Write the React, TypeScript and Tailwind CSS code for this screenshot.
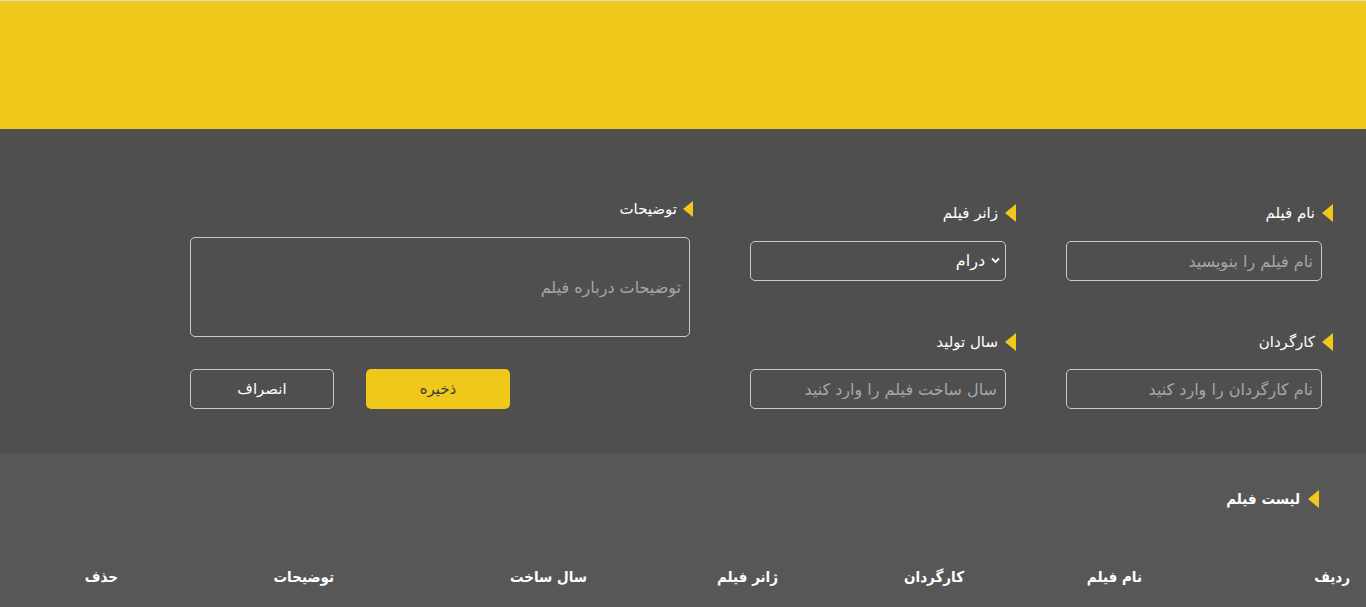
import React from 'react';

const Marker: React.FC<{ small?: boolean }> = ({ small }) => (
    <span
        className={
            small
                ? 'inline-block w-0 h-0 border-y-[8px] border-y-transparent border-r-[10px] border-r-[#f0c81a]'
                : 'inline-block w-0 h-0 border-y-[9px] border-y-transparent border-r-[11px] border-r-[#f0c81a]'
        }
    />
);

const FieldLabel: React.FC<{ text: string; className?: string }> = ({ text, className }) => (
    <div className={`flex items-center gap-[7px] h-[18px] text-[15px] text-white ${className ?? ''}`}>
        <Marker />
        <span>{text}</span>
    </div>
);

const inputCls =
    'w-full h-[40px] rounded-[5px] border border-[#c9c9c9] bg-transparent px-[8px] text-[16px] text-white placeholder:text-[#a3a7ab] outline-none';

const columns = [
    { title: 'ردیف', w: 'w-[208px]' },
    { title: 'نام فیلم', w: 'w-[178px]' },
    { title: 'کارگردان', w: 'w-[186px]' },
    { title: 'ژانر فیلم', w: 'w-[191px]' },
    { title: 'سال ساخت', w: 'w-[253px]' },
    { title: 'توضیحات', w: 'w-[216px]' },
    { title: 'حذف', w: 'w-[134px]' },
];

export default function App() {
    return (
        <div dir="rtl" className="w-[1366px] min-h-[607px] bg-[#575757] font-['DejaVu_Sans',sans-serif]">
            <header className="h-[129px] bg-[#f0c81a] border-t border-[#dcdcdc]" />

            <section className="bg-[#4f4f4f] pt-[75px] pb-[44px] pr-[44px]">
                <div className="flex gap-[60px]">
                    <div className="w-[256px] flex flex-col">
                        <div className="-mr-[11px]">
                            <FieldLabel text="نام فیلم" />
                        </div>
                        <input className={`${inputCls} mt-[19px]`} placeholder="نام فیلم را بنویسید" />
                        <div className="-mr-[11px] mt-[52px]">
                            <FieldLabel text="کارگردان" />
                        </div>
                        <input className={`${inputCls} mt-[18px]`} placeholder="نام کارگردان را وارد کنید" />
                    </div>

                    <div className="w-[256px] flex flex-col">
                        <div className="-mr-[10px]">
                            <FieldLabel text="زانر فیلم" />
                        </div>
                        <div className="relative mt-[19px]">
                            <select className={`${inputCls} appearance-none pr-[20px]`} defaultValue="drama">
                                <option value="drama" className="text-black">درام</option>
                                <option value="comedy" className="text-black">کمدی</option>
                                <option value="action" className="text-black">اکشن</option>
                            </select>
                            <svg
                                className="absolute right-[6px] top-[16px] pointer-events-none"
                                width="9"
                                height="7"
                                viewBox="0 0 9 7"
                                fill="none"
                            >
                                <path d="M1 1.5 L4.5 5 L8 1.5" stroke="white" strokeWidth="1.8" />
                            </svg>
                        </div>
                        <div className="-mr-[10px] mt-[52px]">
                            <FieldLabel text="سال تولید" />
                        </div>
                        <input className={`${inputCls} mt-[18px]`} placeholder="سال ساخت فیلم را وارد کنید" />
                    </div>

                    <div className="w-[500px] flex flex-col">
                        <div className="-mr-[3px] -mt-[4px] flex items-center gap-[6px] h-[18px] text-[15px] text-white">
                            <Marker small />
                            <span>توضیحات</span>
                        </div>
                        <textarea
                            className="mt-[19px] h-[100px] w-full resize-none rounded-[5px] border border-[#c9c9c9] bg-transparent pt-[38px] px-[8px] text-[16px] text-white placeholder:text-[#a3a7ab] outline-none"
                            placeholder="توضیحات درباره فیلم"
                        />
                        <div className="mt-[32px] flex justify-end gap-[32px]">
                            <button className="w-[144px] h-[40px] rounded-[5px] bg-[#f0c81a] text-[15px] text-[#3d3d3d]">
                                ذخیره
                            </button>
                            <button className="w-[144px] h-[40px] rounded-[5px] border border-[#c9c9c9] text-[15px] text-white">
                                انصراف
                            </button>
                        </div>
                    </div>
                </div>
            </section>

            <section className="bg-[#575757] pt-[35px]">
                <div className="flex items-center gap-[8px] pr-[47px] text-[15px] font-bold text-white font-['DejaVu_Sans_Condensed',sans-serif]">
                    <Marker />
                    <span>لیست فیلم</span>
                </div>
                <table className="mt-[55px] w-full table-fixed font-['DejaVu_Sans_Condensed',sans-serif]">
                    <thead>
                        <tr>
                            {columns.map((c) => (
                                <th key={c.title} className={`${c.w} pr-[16px] text-right text-[15px] font-bold text-white`}>
                                    {c.title}
                                </th>
                            ))}
                        </tr>
                    </thead>
                </table>
            </section>
        </div>
    );
}
